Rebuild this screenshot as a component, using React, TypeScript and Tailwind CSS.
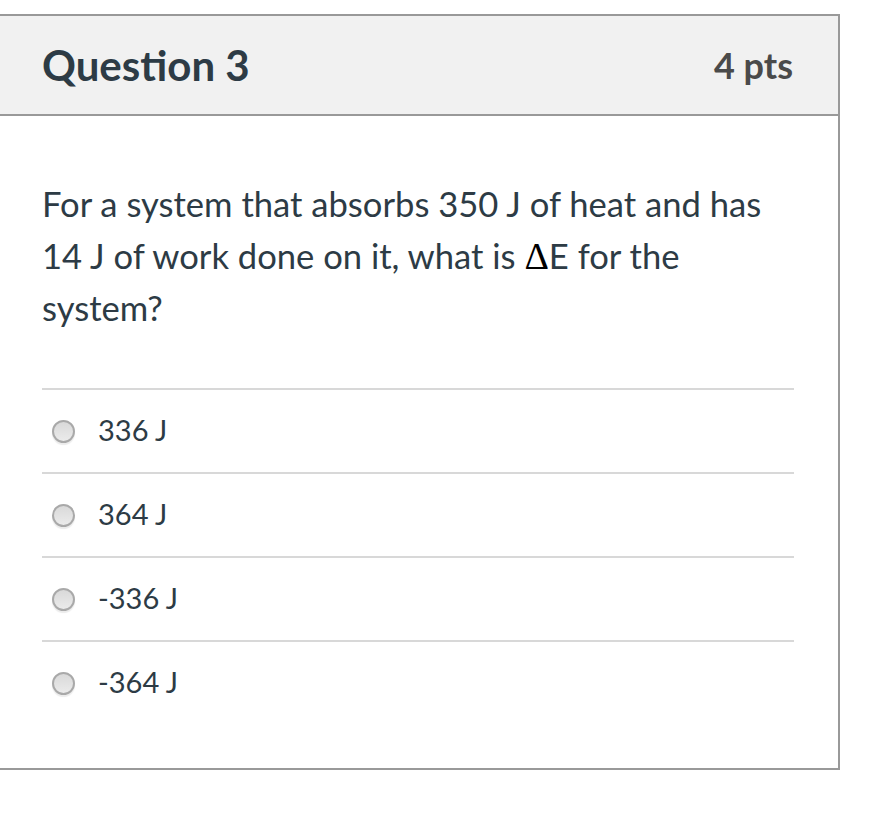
import React from 'react'

const ANSWERS = ['336 J', '364 J', '-336 J', '-364 J']

function Radio() {
  return (
    <span className="inline-block w-[23px] h-[23px] rounded-full border-2 border-[#a9a9a9] bg-gradient-to-b from-[#d9d9d9] to-[#ebebeb] shadow-[0_2px_1px_rgba(0,0,0,0.08)] shrink-0" />
  )
}

export default function App() {
  return (
    <div className="w-[872px] h-[832px] bg-white pt-[14px]" style={{ fontFamily: 'Lato, "Noto Sans", sans-serif' }}>
      <div className="w-[840px] border-t-2 border-r-2 border-b-2 border-[#999999]">
        {/* header */}
        <div className="h-[100px] bg-[#f1f1f1] border-b-2 border-[#999999] flex items-center justify-between pl-[42px] pr-[45px]">
          <h2 className="text-[42px] font-bold text-[#2d3b45]">Question 3</h2>
          <span className="text-[36px] font-bold text-[#4a4a4a]">4 pts</span>
        </div>

        {/* body */}
        <div className="pl-[42px] pr-[44px] pt-[62px] pb-[44px]">
          <p className="text-[34.6px] leading-[52px] text-[#2d3b45] mb-[54px]">
            For a system that absorbs 350 J of heat and has 14 J of work done on it, what is{' '}
            <span className="text-black text-[38px] leading-none" style={{ fontFamily: '"Liberation Serif", serif' }}>Δ</span>E for the system?
          </p>

          <div className="border-t-2 border-[#d8d8d8]">
            {ANSWERS.map((a, i) => (
              <div key={a}
                className={`flex items-center pl-[10px] gap-[23px] ${i < ANSWERS.length - 1 ? 'h-[84px] border-b-2 border-[#d8d8d8]' : 'h-[82px]'}`}>
                <Radio />
                <span className="text-[29px] leading-[40px] pb-[3px] text-[#2d3b45]">{a}</span>
              </div>
            ))}
          </div>
        </div>
      </div>
    </div>
  )
}
